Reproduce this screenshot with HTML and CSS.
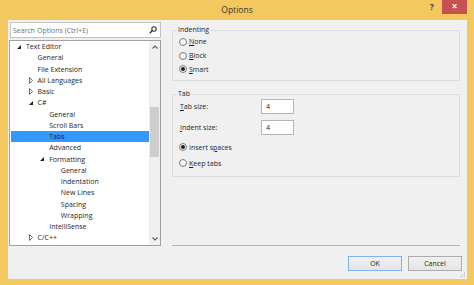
FILE: index.html
```html
<!DOCTYPE html>
<html lang="en">
<head>
    <meta charset="UTF-8">
    <meta name="viewport" content="width=device-width, initial-scale=1.0">
    <title>Options</title>
    <link rel="stylesheet" href="styles.css">
</head>
<body>
<div class="window">
    <div class="titlebar">
        <span></span>
        <span class="caption">Options</span>
        <div class="caption-buttons">
            <span class="help">?</span>
            <span class="close">&times;</span>
        </div>
    </div>

    <div class="client">
        <div class="nav">
            <div class="search">
                <span class="placeholder">Search Options (Ctrl+E)</span>
                <svg class="magnifier" width="8" height="8" viewBox="0 0 8 8">
                    <circle cx="5" cy="3" r="2.2" fill="none" stroke="#333" stroke-width="1.1"/>
                    <path d="M3.4 4.6 0.8 7.2" stroke="#333" stroke-width="1.4"/>
                </svg>
            </div>

            <div class="tree">
                <ul class="tree-items">
                    <li class="l0"><span class="slot"><svg width="6" height="6" viewBox="0 0 6 6"><path d="M5 1v4H1z" fill="#1e1e1e"/></svg></span>Text Editor</li>
                    <li class="l1"><span class="slot"></span>General</li>
                    <li class="l1"><span class="slot"></span>File Extension</li>
                    <li class="l1"><span class="slot"><svg width="6" height="7" viewBox="0 0 6 7"><path d="M1.5 0.5 4.5 3.5 1.5 6.5z" fill="#fff" stroke="#6b6b6b"/></svg></span>All Languages</li>
                    <li class="l1"><span class="slot"><svg width="6" height="7" viewBox="0 0 6 7"><path d="M1.5 0.5 4.5 3.5 1.5 6.5z" fill="#fff" stroke="#6b6b6b"/></svg></span>Basic</li>
                    <li class="l1"><span class="slot"><svg width="6" height="6" viewBox="0 0 6 6"><path d="M5 1v4H1z" fill="#1e1e1e"/></svg></span>C#</li>
                    <li class="l2"><span class="slot"></span>General</li>
                    <li class="l2"><span class="slot"></span>Scroll Bars</li>
                    <li class="l2 selected"><span class="slot"></span>Tabs</li>
                    <li class="l2"><span class="slot"></span>Advanced</li>
                    <li class="l2"><span class="slot"><svg width="6" height="6" viewBox="0 0 6 6"><path d="M5 1v4H1z" fill="#1e1e1e"/></svg></span>Formatting</li>
                    <li class="l3"><span class="slot"></span>General</li>
                    <li class="l3"><span class="slot"></span>Indentation</li>
                    <li class="l3"><span class="slot"></span>New Lines</li>
                    <li class="l3"><span class="slot"></span>Spacing</li>
                    <li class="l3"><span class="slot"></span>Wrapping</li>
                    <li class="l2"><span class="slot"></span>IntelliSense</li>
                    <li class="l1"><span class="slot"><svg width="6" height="7" viewBox="0 0 6 7"><path d="M1.5 0.5 4.5 3.5 1.5 6.5z" fill="#fff" stroke="#6b6b6b"/></svg></span>C/C++</li>
                </ul>
                <div class="scrollbar">
                    <div class="arrow">
                        <svg width="6" height="4" viewBox="0 0 6 4"><path d="M0.5 3.5 3 1 5.5 3.5" fill="none" stroke="#606060" stroke-width="1.1"/></svg>
                    </div>
                    <div class="track"><div class="thumb"></div></div>
                    <div class="arrow">
                        <svg width="6" height="4" viewBox="0 0 6 4"><path d="M0.5 0.5 3 3 5.5 0.5" fill="none" stroke="#606060" stroke-width="1.1"/></svg>
                    </div>
                </div>
            </div>
        </div>

        <div class="page">
            <fieldset class="group indenting">
                <legend>Indenting</legend>
                <div class="radio"><span class="dot"></span><span><u>N</u>one</span></div>
                <div class="radio"><span class="dot"></span><span><u>B</u>lock</span></div>
                <div class="radio"><span class="dot checked"></span><span><u>S</u>mart</span></div>
            </fieldset>

            <fieldset class="group tab">
                <legend>Tab</legend>
                <div class="field">
                    <label for="tabSize"><u>T</u>ab size:</label>
                    <input type="text" id="tabSize" value="4">
                </div>
                <div class="field">
                    <label for="indentSize"><u>I</u>ndent size:</label>
                    <input type="text" id="indentSize" value="4">
                </div>
                <div class="radio wide"><span class="dot checked"></span><span>Insert s<u>p</u>aces</span></div>
                <div class="radio wide"><span class="dot"></span><span><u>K</u>eep tabs</span></div>
            </fieldset>

            <div class="rule"></div>
        </div>

        <div class="buttons">
            <button class="default">OK</button>
            <button>Cancel</button>
        </div>

        <svg class="grip" width="6" height="6" viewBox="0 0 6 6">
            <rect x="4" y="0" width="1" height="1" fill="#b8b8b8"/>
            <rect x="2" y="2" width="1" height="1" fill="#b8b8b8"/>
            <rect x="4" y="2" width="1" height="1" fill="#b8b8b8"/>
            <rect x="0" y="4" width="1" height="1" fill="#b8b8b8"/>
            <rect x="2" y="4" width="1" height="1" fill="#b8b8b8"/>
            <rect x="4" y="4" width="1" height="1" fill="#b8b8b8"/>
        </svg>
    </div>
</div>
</body>
</html>
```

FILE: styles.css
```css
* {
    box-sizing: border-box;
}
body {
    margin: 0;
    background-color: #f3c85f;
    font-family: "Open Sans", "Noto Sans", sans-serif;
    font-size: 7px;
    color: #1e1e1e;
}
.window {
    width: 474px;
    height: 285px;
    display: flex;
    flex-direction: column;
}

/* title bar */
.titlebar {
    height: 20px;
    display: grid;
    grid-template-columns: 1fr auto 1fr;
    align-items: start;
}
.caption {
    font-size: 8.5px;
    line-height: 20px;
    color: #333;
}
.caption-buttons {
    justify-self: end;
    display: flex;
    margin-right: 7px;
}
.help {
    width: 12px;
    margin-right: 4px;
    line-height: 14px;
    text-align: center;
    font-size: 8px;
    font-weight: bold;
    color: #333;
}
.close {
    width: 25px;
    height: 14px;
    line-height: 13px;
    text-align: center;
    background-color: #c75050;
    color: #fff;
    font-size: 10px;
    font-weight: bold;
}

/* dialog body */
.client {
    flex: 1;
    margin: 0 7px 6px 8px;
    padding: 2px 0 8px 1px;
    background-color: #f0f0f0;
    display: grid;
    grid-template-columns: 152px 288px;
    grid-template-rows: 1fr auto;
    column-gap: 11px;
    position: relative;
}
.nav {
    display: flex;
    flex-direction: column;
    min-height: 0;
}
.search {
    height: 16px;
    margin-left: 1px;
    background-color: #fff;
    border: 1px solid #c3c3c3;
    display: flex;
    align-items: center;
    justify-content: space-between;
    padding: 0 3px 0 2px;
}
.placeholder {
    color: #707070;
}
.tree {
    flex: 1;
    margin-top: 2px;
    background-color: #fff;
    border: 1px solid #a0a0a0;
    display: flex;
    min-height: 0;
}
.tree-items {
    flex: 1;
    list-style: none;
    margin: 0;
    padding: 0;
}
.tree-items li {
    height: 11.25px;
    line-height: 11.25px;
    margin-left: 1px;
    display: flex;
    align-items: center;
    white-space: nowrap;
}
.tree-items .l0 { padding-left: 3px; }
.tree-items .l1 { padding-left: 14.6px; }
.tree-items .l2 { padding-left: 26.2px; }
.tree-items .l3 { padding-left: 37.8px; }
.slot {
    width: 12px;
    height: 11px;
    display: flex;
    align-items: center;
    padding-left: 2px;
}
.tree-items .selected {
    background-color: #3399ff;
}
.scrollbar {
    width: 11px;
    background-color: #f0f0f0;
    display: flex;
    flex-direction: column;
}
.arrow {
    height: 12px;
    display: flex;
    align-items: center;
    justify-content: center;
}
.track {
    flex: 1;
}
.thumb {
    margin: 54px 1px 0 1px;
    height: 50px;
    background-color: #cdcdcd;
}

/* options page */
.page {
    display: flex;
    flex-direction: column;
    padding-top: 3px;
}
.group {
    margin: 0;
    border: 1px solid #dcdcdc;
    padding: 0 0 4px 6px;
}
.group legend {
    line-height: 10px;
    padding: 0 1px;
    margin-left: -2px;
}
.group.tab {
    margin-top: 8px;
    padding-bottom: 5px;
}
.radio {
    height: 13.8px;
    display: flex;
    align-items: center;
}
.radio.wide {
    height: 16px;
}
.dot {
    width: 8px;
    height: 8px;
    margin-right: 2px;
    border: 1px solid #7c7c7c;
    border-radius: 50%;
    background-color: #f6f6f6;
    display: flex;
    align-items: center;
    justify-content: center;
}
.dot.checked::after {
    content: "";
    width: 4px;
    height: 4px;
    border-radius: 50%;
    background-color: #1e1e1e;
}
.field {
    display: grid;
    grid-template-columns: 81px 33px;
    align-items: center;
    padding-left: 1px;
    margin-bottom: 6px;
}
.field input {
    height: 15px;
    width: 33px;
    border: 1px solid #b5b5b5;
    background-color: #fff;
    font-family: inherit;
    font-size: 7px;
    color: #1e1e1e;
    padding: 0 0 0 4px;
    margin: 0;
}
.field + .radio {
    margin-top: -2px;
}
.rule {
    margin-top: auto;
    height: 1px;
    background-color: #b4b4b4;
}

/* buttons */
.buttons {
    grid-column: 1 / -1;
    margin-top: 10px;
    margin-right: -2px;
    display: flex;
    justify-content: flex-end;
    gap: 6px;
}
.buttons button {
    width: 54px;
    height: 15px;
    padding: 0;
    font-family: inherit;
    font-size: 7px;
    color: #1e1e1e;
    background: linear-gradient(#f0f0f0, #e5e5e5);
    border: 1px solid #acacac;
}
.buttons .default {
    border-color: #7eb4ea;
}
.grip {
    position: absolute;
    right: 1px;
    bottom: 1px;
}
```
